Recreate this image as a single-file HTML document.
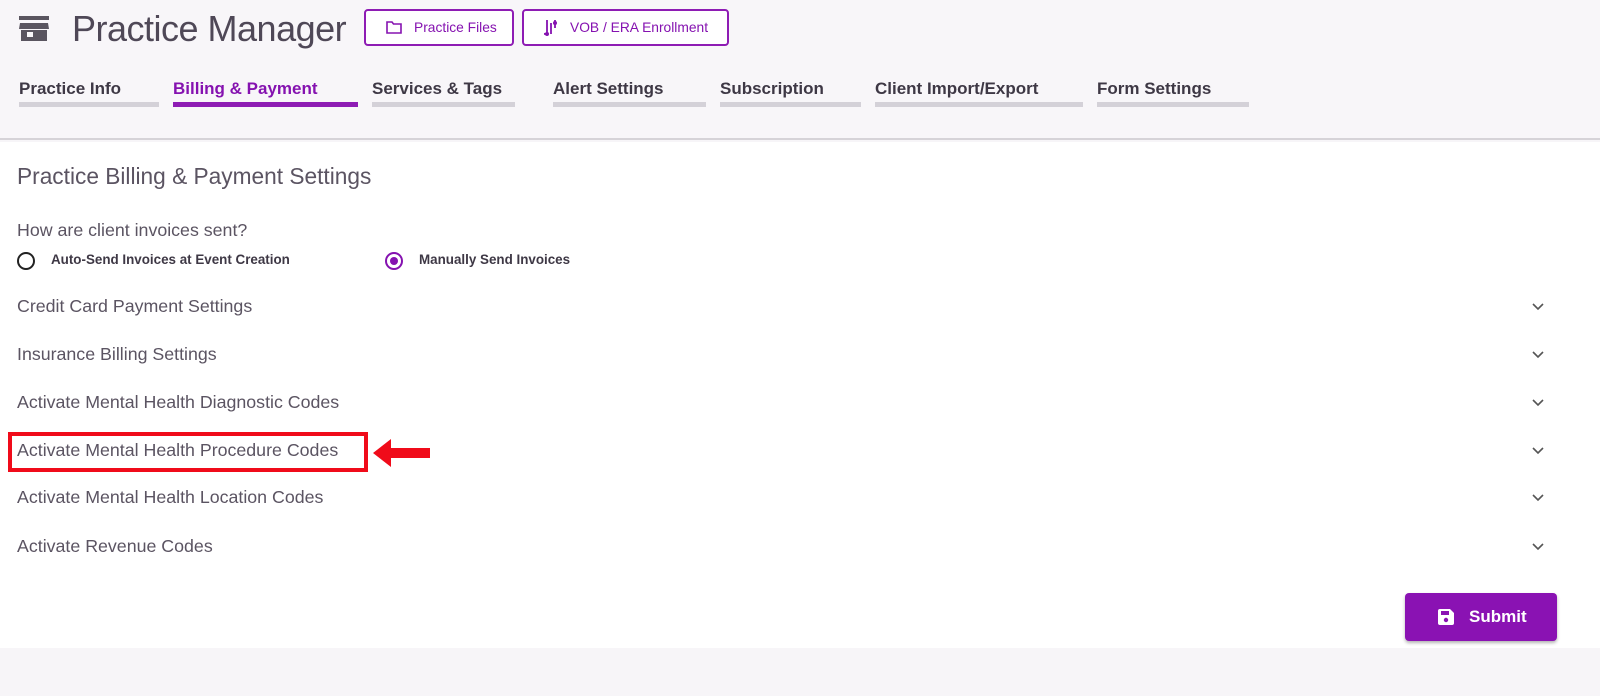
<!DOCTYPE html>
<html><head><meta charset="utf-8"><style>
*{box-sizing:border-box;margin:0;padding:0}
body{width:1600px;height:696px;font-family:"Liberation Sans",sans-serif;background:#f7f5f8;position:relative;overflow:hidden;color:#5b5462}
.hdr{position:absolute;left:0;top:0;width:1600px;height:140px;background:#f8f6f9;border-bottom:2px solid #d6d3d8}
.title{position:absolute;left:72px;top:8px;font-size:36px;color:#4f4857;letter-spacing:-0.5px}
.btn{position:absolute;top:9px;height:37px;border:2px solid #8e1cb4;border-radius:4px;background:#fff;color:#8512b0;font-size:13.8px;display:flex;align-items:center;padding-left:20px}
.btn svg{margin-right:12px}
.tab{position:absolute;top:79px;font-size:17px;font-weight:bold;color:#3e3845;border-bottom:5px solid #d4d1d8;height:28px}
.tab.act{color:#8512b0;border-bottom-color:#8e1cb4}
.main{position:absolute;left:0;top:142px;width:1600px;height:506px;background:#fff}
.h2{position:absolute;left:17px;top:163px;font-size:22.7px;color:#5b5462}
.lbl{position:absolute;left:17px;font-size:17.8px;color:#5b5462}
.rad{position:absolute;top:252px;width:18px;height:18px;border-radius:50%;border:2px solid #222}
.rt{position:absolute;top:252px;font-size:13.4px;font-weight:bold;color:#3e3845}
.chev{position:absolute;left:1531px;width:14px;height:10px}
.sub{position:absolute;left:1405px;top:593px;width:152px;height:48px;background:#8a12b3;border-radius:4px;box-shadow:0 2px 3px rgba(0,0,0,.3);color:#fff;font-weight:bold;font-size:17px;display:flex;align-items:center;padding-left:32px}
</style></head><body>
<div class="hdr">
<svg style="position:absolute;left:19px;top:16px" width="30" height="26" viewBox="0 0 30 26"><rect x="0" y="0" width="30" height="4" fill="#5a5560"/><path d="M1 7h28l1 6H0z" fill="#5a5560"/><rect x="2" y="14" width="26" height="11" fill="#5a5560"/><rect x="8" y="16" width="6" height="5" fill="#f8f6f9"/></svg>
<div class="title">Practice Manager</div>
<div class="btn" style="left:364px;width:150px"><svg width="16" height="13" viewBox="0 0 16 13"><path d="M1 1h5l1.5 2H15v9H1z" fill="none" stroke="#8512b0" stroke-width="1.6"/></svg>Practice Files</div>
<div class="btn" style="left:522px;width:207px"><svg width="14" height="18" viewBox="0 0 14 18"><path d="M3 1v12a2 2 0 0 1-4 0M7 4v11M11 1v8" fill="none" stroke="#8512b0" stroke-width="1.8"/><circle cx="11" cy="4" r="2" fill="#8512b0"/><circle cx="3" cy="15" r="2" fill="#8512b0"/></svg>VOB / ERA Enrollment</div>
<div class="tab" style="left:19px;width:140px">Practice Info</div>
<div class="tab act" style="left:173px;width:185px">Billing &amp; Payment</div>
<div class="tab" style="left:372px;width:143px">Services &amp; Tags</div>
<div class="tab" style="left:553px;width:153px">Alert Settings</div>
<div class="tab" style="left:720px;width:141px">Subscription</div>
<div class="tab" style="left:875px;width:208px">Client Import/Export</div>
<div class="tab" style="left:1097px;width:152px">Form Settings</div>
</div>
<div class="main"></div>
<div class="h2">Practice Billing &amp; Payment Settings</div>
<div class="lbl" style="top:220px">How are client invoices sent?</div>
<div class="rad" style="left:17px"></div>
<div class="rt" style="left:51px">Auto-Send Invoices at Event Creation</div>
<div class="rad" style="left:385px;border-color:#8512b0"><div style="position:absolute;left:3px;top:3px;width:8px;height:8px;border-radius:50%;background:#8512b0"></div></div>
<div class="rt" style="left:419px">Manually Send Invoices</div>
<div class="lbl" style="top:296px">Credit Card Payment Settings</div>
<div class="lbl" style="top:344px">Insurance Billing Settings</div>
<div class="lbl" style="top:392px">Activate Mental Health Diagnostic Codes</div>
<div class="lbl" style="top:440px">Activate Mental Health Procedure Codes</div>
<div class="lbl" style="top:487px">Activate Mental Health Location Codes</div>
<div class="lbl" style="top:536px">Activate Revenue Codes</div>
<svg class="chev" style="top:302px" viewBox="0 0 14 10"><path d="M2 2l5 5 5-5" fill="none" stroke="#555" stroke-width="1.6"/></svg>
<svg class="chev" style="top:350px" viewBox="0 0 14 10"><path d="M2 2l5 5 5-5" fill="none" stroke="#555" stroke-width="1.6"/></svg>
<svg class="chev" style="top:398px" viewBox="0 0 14 10"><path d="M2 2l5 5 5-5" fill="none" stroke="#555" stroke-width="1.6"/></svg>
<svg class="chev" style="top:446px" viewBox="0 0 14 10"><path d="M2 2l5 5 5-5" fill="none" stroke="#555" stroke-width="1.6"/></svg>
<svg class="chev" style="top:493px" viewBox="0 0 14 10"><path d="M2 2l5 5 5-5" fill="none" stroke="#555" stroke-width="1.6"/></svg>
<svg class="chev" style="top:542px" viewBox="0 0 14 10"><path d="M2 2l5 5 5-5" fill="none" stroke="#555" stroke-width="1.6"/></svg>
<div style="position:absolute;left:8px;top:432px;width:360px;height:40px;border:4px solid #f00b1a"></div>
<svg style="position:absolute;left:373px;top:438px" width="58" height="30" viewBox="0 0 58 30"><path d="M0 15L18 1v9h39v10H18v9z" fill="#f00b1a"/></svg>
<div class="sub"><svg width="18" height="18" viewBox="0 0 18 18" style="margin-right:14px"><path d="M1 3a2 2 0 0 1 2-2h10l4 4v10a2 2 0 0 1-2 2H3a2 2 0 0 1-2-2z" fill="#fff"/><rect x="4" y="3" width="8" height="4" fill="#8a12b3"/><circle cx="9" cy="12" r="2.2" fill="#8a12b3"/></svg>Submit</div>
</body></html>
